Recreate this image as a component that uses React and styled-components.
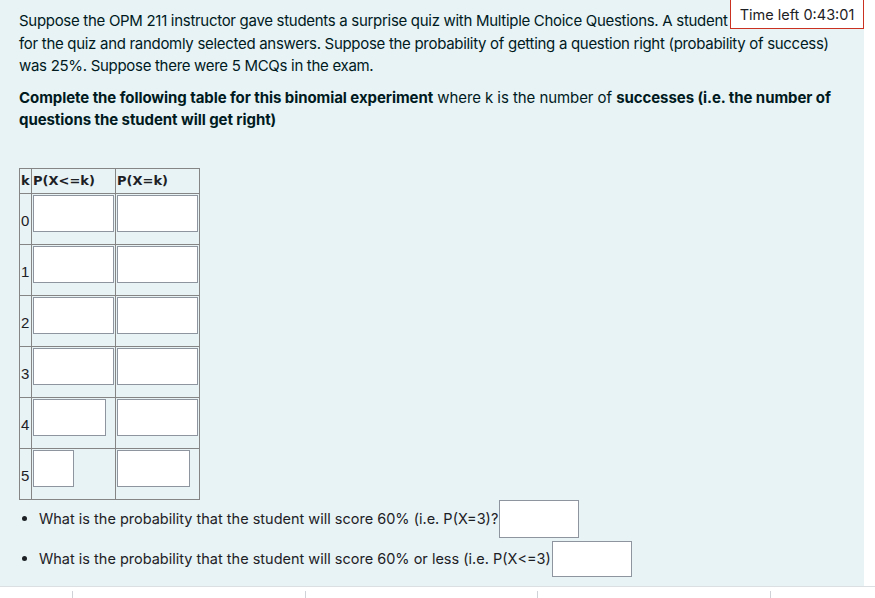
import styled, { createGlobalStyle } from 'styled-components';

const GlobalStyle = createGlobalStyle`
  html, body {
    margin: 0;
    padding: 0;
    background: #fff;
  }
  body {
    font-family: Inter, 'Noto Sans', sans-serif;
    color: #1d2125;
  }
`;

const rows = [
  { k: 0, a: 81, b: 81 },
  { k: 1, a: 81, b: 81 },
  { k: 2, a: 81, b: 81 },
  { k: 3, a: 81, b: 81 },
  { k: 4, a: 73, b: 81 },
  { k: 5, a: 41, b: 73 },
];

export default function App() {
  return (
    <Page>
      <GlobalStyle />
      <Panel>
        <Para>
          Suppose the OPM 211 instructor gave students a surprise quiz with Multiple Choice
          Questions. A student didn&apos;t prepare
          <br />
          for the quiz and randomly selected answers. Suppose the probability of getting a
          question right (probability of success) was 25%. Suppose there were 5 MCQs in the exam.
        </Para>
        <Para $bold>
          <b>Complete the following table for this binomial experiment</b> where k is the number
          of <b>successes (i.e. the number of questions the student will get right)</b>
        </Para>
        <Table>
          <thead>
            <tr>
              <Th>k</Th>
              <Th>P(X&lt;=k)</Th>
              <Th>P(X=k)</Th>
            </tr>
          </thead>
          <tbody>
            {rows.map((r) => (
              <tr key={r.k}>
                <KCell>{r.k}</KCell>
                <Cell>
                  <CellInput $w={r.a} />
                </Cell>
                <Cell>
                  <CellInput $w={r.b} />
                </Cell>
              </tr>
            ))}
          </tbody>
        </Table>
        <List>
          <Item $h={38}>
            <Bullet />
            What is the probability that the student will score 60% (i.e. P(X=3)?
            <AnswerInput $h={38} />
          </Item>
          <Item $h={36}>
            <Bullet />
            What is the probability that the student will score 60% or less (i.e. P(X&lt;=3)
            <AnswerInput $h={36} />
          </Item>
        </List>
      </Panel>
      <Footer>
        <Tick />
        <Tick />
        <Tick />
        <Tick />
      </Footer>
      <Timer>Time left 0:43:01</Timer>
    </Page>
  );
}

const Page = styled.div`
  width: 875px;
  height: 598px;
  overflow: hidden;
`;

const Panel = styled.div`
  width: 864px;
  box-sizing: border-box;
  background: #e7f3f5;
  padding: 10px 19px 9px;
  color: #001a1e;
`;

const Para = styled.p`
  margin: 0 0 9px;
  font-size: 15px;
  line-height: 22.5px;
  letter-spacing: ${(p) => (p.$bold ? '-0.07px' : '-0.3px')};
  b {
    font-weight: 700;
  }
`;

const Table = styled.table`
  margin-top: 36px;
  border-collapse: collapse;
  font-family: 'DejaVu Sans', Verdana, sans-serif;
  color: #1d2125;
`;

const Th = styled.th`
  border: 1px solid #858585;
  padding: 0 1px;
  height: 24px;
  font-size: 13px;
  font-weight: 700;
  text-align: left;
  vertical-align: middle;
  white-space: nowrap;
  &:first-child {
    width: 9px;
  }
  &:not(:first-child) {
    width: 81px;
  }
`;

const KCell = styled.td`
  border: 1px solid #858585;
  padding: 3px 0 0 1px;
  height: 51px;
  font-family: 'Liberation Sans', Arial, sans-serif;
  font-size: 15px;
  vertical-align: middle;
  box-sizing: border-box;
`;

const Cell = styled.td`
  border: 1px solid #858585;
  padding: 1px;
  height: 51px;
  vertical-align: top;
  box-sizing: border-box;
`;

const CellInput = styled.input.attrs({ type: 'text' })`
  display: block;
  width: ${(p) => p.$w}px;
  height: 37px;
  box-sizing: border-box;
  margin: 0;
  border: 1px solid #8f959e;
  background: #fff;
  outline: none;
`;

const List = styled.ul`
  list-style: none;
  margin: 0;
  padding: 0;
  display: flex;
  flex-direction: column;
  gap: 3px;
`;

const Item = styled.li`
  display: flex;
  align-items: center;
  height: ${(p) => p.$h}px;
  font-size: 14.5px;
  color: #1d2125;
  white-space: nowrap;
`;

const Bullet = styled.span`
  width: 5px;
  height: 5px;
  border-radius: 50%;
  background: #1d2125;
  margin: 0 12px 0 3px;
`;

const AnswerInput = styled.input.attrs({ type: 'text' })`
  width: 80px;
  height: ${(p) => p.$h}px;
  box-sizing: border-box;
  margin: 0 0 0 1px;
  border: 1px solid #8f959e;
  background: #fff;
  outline: none;
`;

const Footer = styled.div`
  border-top: 1px solid #dcdfe2;
  display: grid;
  grid-template-columns: repeat(4, 232.67px);
  padding-left: 72px;
`;

const Tick = styled.div`
  height: 7px;
  margin-top: 4px;
  border-left: 1px solid #cfd3d7;
`;

const Timer = styled.div`
  position: fixed;
  top: -1px;
  left: 730px;
  width: 134px;
  height: 30px;
  box-sizing: border-box;
  border: 1px solid #ca3120;
  background: #fff;
  display: flex;
  align-items: center;
  justify-content: center;
  padding-top: 1px;
  font-size: 14.5px;
  color: #1d2125;
`;
